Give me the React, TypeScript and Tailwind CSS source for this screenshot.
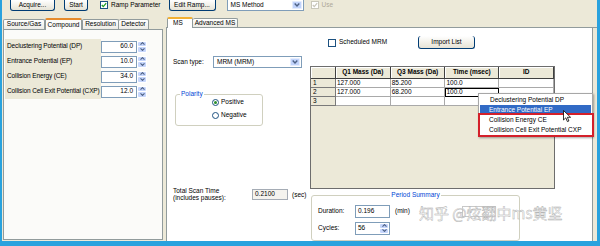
import React from "react";

function Chevron({ up = false }: { up?: boolean }) {
  return (
    <svg width="5" height="3" viewBox="0 0 5 3">
      <path
        d={up ? "M0.5 2.6 L2.5 0.6 L4.5 2.6" : "M0.5 0.4 L2.5 2.4 L4.5 0.4"}
        fill="none"
        stroke="#4d6185"
        strokeWidth="1.1"
      />
    </svg>
  );
}

function UpDown() {
  return (
    <div className="flex flex-col w-[10px] h-full gap-px p-px bg-white">
      <div className="flex-1 rounded-[1px] bg-[#c6d6fc] flex items-center justify-center">
        <Chevron up />
      </div>
      <div className="flex-1 rounded-[1px] bg-[#c6d6fc] flex items-center justify-center">
        <Chevron />
      </div>
    </div>
  );
}

function Combo({ label, className }: { label: string; className: string }) {
  return (
    <div className={`flex border border-[#7f9db9] bg-white ${className}`}>
      <div className="flex-1 flex items-center pl-[3px]">{label}</div>
      <div className="w-[10px] m-px rounded-[1px] bg-[#c1d3fb] border border-[#e4ecfd] flex items-center justify-center">
        <svg width="6" height="4" viewBox="0 0 6 4">
          <path d="M0.7 0.6 L3 3 L5.3 0.6" fill="none" stroke="#4d6185" strokeWidth="1.4" />
        </svg>
      </div>
    </div>
  );
}

function Check({ checked = false, disabled = false }: { checked?: boolean; disabled?: boolean }) {
  return (
    <div
      className={`w-[8px] h-[8px] border bg-white flex items-center justify-center ${
        disabled ? "border-[#c9c7ba]" : "border-[#1c5180]"
      }`}
    >
      {checked && (
        <svg width="6" height="6" viewBox="0 0 6 6">
          <path
            d="M0.8 3 L2.3 4.6 L5.2 1.2"
            fill="none"
            stroke={disabled ? "#c9c7ba" : "#21a121"}
            strokeWidth="1.3"
          />
        </svg>
      )}
    </div>
  );
}

function Radio({ on = false }: { on?: boolean }) {
  return (
    <div className="w-[7px] h-[7px] rounded-full border border-[#1c5180] bg-white flex items-center justify-center">
      {on && <div className="w-[3px] h-[3px] rounded-full bg-[#2a8f2a]" />}
    </div>
  );
}

function ToolButton({ label, className }: { label: string; className: string }) {
  return (
    <div
      className={`h-[11px] border border-t-0 border-[#003c74] rounded-b-[3px] bg-linear-to-b from-white to-[#e6e3d6] flex items-center justify-center ${className}`}
    >
      {label}
    </div>
  );
}

const compoundRows = [
  { label: "Declustering Potential (DP)", value: "60.0" },
  { label: "Entrance Potential (EP)", value: "10.0" },
  { label: "Collision Energy (CE)", value: "34.0" },
  { label: "Collision Cell Exit Potential (CXP)", value: "12.0" },
];

const gridRows = [
  ["1", "127.000", "85.200", "100.0", ""],
  ["2", "127.000", "68.200", "100.0", ""],
  ["3", "", "", "", ""],
];

const colWidths = ["w-[25px]", "w-[55px]", "w-[55px]", "w-[54px]", "w-[55px]"];

function LeftPanel() {
  return (
    <div className="w-[160px] flex flex-col">
      <div className="h-[17px] flex items-end border-b border-[#919b9c]">
        <div className="w-[42px] h-[10px] border border-b-0 border-[#919b9c] rounded-t-[2px] bg-linear-to-b from-white to-[#ecebe5] flex items-center justify-center">
          Source/Gas
        </div>
        <div className="w-[37px] h-[12px] -mb-px border-x border-[#919b9c] border-t-2 border-t-[#e68b2c] rounded-t-[2px] bg-[#fbfbf9] flex items-center justify-center">
          Compound
        </div>
        <div className="w-[37px] h-[10px] border border-b-0 border-[#919b9c] rounded-t-[2px] bg-linear-to-b from-white to-[#ecebe5] flex items-center justify-center">
          Resolution
        </div>
        <div className="w-[30px] h-[10px] border border-b-0 border-l-0 border-[#919b9c] rounded-t-[2px] bg-linear-to-b from-white to-[#ecebe5] flex items-center justify-center">
          Detector
        </div>
      </div>
      <div className="flex-1 border-x border-b border-[#919b9c] bg-[#fbfbf9] pt-[9px] mb-[1px]">
        {compoundRows.map((r) => (
          <div key={r.label} className="flex h-[15px] items-center">
            <div className="ml-px w-[96px] h-full bg-[#ece9d8] flex items-center pl-[2px] whitespace-nowrap tracking-[-0.12px]">
              {r.label}
            </div>
            <div className="flex h-[12px]">
              <div className="w-[36px] h-full border border-[#7f9db9] bg-white flex items-center justify-end pr-[3px]">
                {r.value}
              </div>
              <UpDown />
            </div>
          </div>
        ))}
      </div>
    </div>
  );
}

function Grid() {
  return (
    <div className="w-[245px] h-[123px] border border-[#6d6d6d] bg-[#ece9d8] flex flex-col">
      <div className="flex h-[12px]">
        {["", "Q1 Mass (Da)", "Q3 Mass (Da)", "Time (msec)", "ID"].map((h, i) => (
          <div
            key={i}
            className={`${colWidths[i]} h-full border-r border-b border-[#404040] shadow-[inset_1px_1px_0_#fff] flex items-center justify-center font-bold`}
          >
            {h}
          </div>
        ))}
      </div>
      {gridRows.map((row) => (
        <div key={row[0]} className="flex h-[9px]">
          {row.map((c, i) =>
            i === 0 ? (
              <div
                key={i}
                className={`${colWidths[i]} h-full border-r border-b border-[#7a7a7a] bg-[#ece9d8] flex items-center pl-[2px]`}
              >
                {c}
              </div>
            ) : (
              <div
                key={i}
                className={`${colWidths[i]} h-full border-r border-b border-[#a9a9a9] bg-white flex items-center pl-px ${
                  row[0] === "2" && i === 3 ? "outline outline-1 outline-black -outline-offset-1" : ""
                }`}
              >
                {c}
              </div>
            )
          )}
        </div>
      ))}
    </div>
  );
}

function RightPanel() {
  return (
    <div className="flex-1 flex flex-col">
      <div className="h-[15px] flex items-end border-b border-[#919b9c] pl-px">
        <div className="w-[26px] h-[11px] -mb-px border-x border-[#919b9c] border-t-2 border-t-[#f2b033] rounded-t-[2px] bg-white flex items-center pl-[5px]">
          MS
        </div>
        <div className="w-[45px] h-[9px] border border-b-0 border-l-0 border-[#919b9c] rounded-t-[2px] bg-linear-to-b from-white to-[#ecebe5] flex items-center justify-center">
          Advanced MS
        </div>
      </div>
      <div className="flex-1 flex border-l border-r border-[#919b9c] bg-white mr-[4px]">
        <div className="w-[143px] pl-[6px] pt-[28px] flex flex-col">
          <div className="flex h-[12px] items-center">
            <div className="w-[40px]">Scan type:</div>
            <Combo label="MRM (MRM)" className="w-[89px] h-[12px]" />
          </div>
          <fieldset className="mt-[23px] ml-[2px] w-[88px] h-[35px] border border-[#d0d0bf] rounded-[3px] pt-[1px]">
            <legend className="ml-[4px] px-[1px] text-[#0046d5]">Polarity</legend>
            <div className="flex flex-col gap-[6px] pl-[36px]">
              <div className="flex items-center gap-[2px]">
                <Radio on />
                <span>Positive</span>
              </div>
              <div className="flex items-center gap-[2px]">
                <Radio />
                <span>Negative</span>
              </div>
            </div>
          </fieldset>
          <div className="mt-[61px] flex items-start">
            <div className="w-[79px] leading-[7px]">
              Total Scan Time
              <br />
              (includes pauses):
            </div>
            <div className="mt-[2px] w-[36px] h-[11px] border border-[#a5acb5] bg-[#f4f3ee] flex items-center pl-[2px]">
              0.2100
            </div>
            <div className="ml-[4px] mt-[5px]">(sec)</div>
          </div>
        </div>
        <div className="flex-1 pt-[8px] flex flex-col">
          <div className="flex h-[13px] items-center pl-[18px]">
            <div className="w-[90px] flex items-center gap-[3px]">
              <Check />
              <span>Scheduled MRM</span>
            </div>
            <ToolButton label="Import List" className="w-[57px] h-[13px] border-t rounded-[3px]" />
          </div>
          <div className="mt-[17px]">
            <Grid />
          </div>
          <fieldset className="mt-[3px] ml-px w-[209px] flex-1 border border-[#d0d0bf] rounded-[3px] pt-[6px]">
            <legend className="mx-auto px-[1px] text-[#0046d5]">Period Summary</legend>
            <div className="flex h-[13px] items-center pl-[6px]">
              <div className="w-[37px]">Duration:</div>
              <div className="w-[35px] h-full border border-[#7f9db9] bg-white flex items-center pl-[2px]">0.196</div>
              <div className="ml-[5px]">(min)</div>
              <div className="ml-[52px] w-[34px] h-[11px] border border-[#c8c8c8] bg-white" />
            </div>
            <div className="flex h-[13px] items-center mt-[4px] pl-[6px]">
              <div className="w-[37px]">Cycles:</div>
              <div className="w-[35px] h-full flex border border-[#7f9db9] bg-white">
                <div className="flex-1 flex items-center pl-[2px]">56</div>
                <UpDown />
              </div>
            </div>
          </fieldset>
        </div>
      </div>
    </div>
  );
}

export default function App() {
  return (
    <div className="w-[600px] h-[246px] bg-[#29a2de] pl-[2px] pr-[3px] pb-[5px] font-['Liberation_Sans',Arial,sans-serif] text-[6.5px] leading-none text-black">
      <div className="relative w-full h-full bg-[#ece9d8] flex flex-col overflow-hidden">
        <div className="h-[13px] flex items-start pl-[8px]">
          <ToolButton label="Acquire..." className="w-[45px]" />
          <ToolButton label="Start" className="ml-[9px] w-[24px]" />
          <div className="ml-[12px] h-[10px] flex items-center gap-[3px]">
            <Check checked />
            <span>Ramp Parameter</span>
          </div>
          <ToolButton label="Edit Ramp..." className="ml-[8px] w-[47px]" />
          <Combo label="MS Method" className="ml-[11px] w-[77px] h-[11px] border-t-0" />
          <div className="ml-[7px] h-[10px] flex items-center gap-[3px] text-[#aca899]">
            <Check checked disabled />
            <span>Use</span>
          </div>
        </div>
        <div className="flex flex-1 min-h-0 pl-px">
          <LeftPanel />
          <div className="w-[3px]" />
          <RightPanel />
        </div>

        <div className="absolute left-[476px] top-[93px] w-[115px] h-[44px] bg-white border border-[#a7a7a7] shadow-[1px_1px_2px_rgba(0,0,0,0.35)] pt-[1px] px-[1px]">
          <div className="h-[10px] flex items-center pl-[10px]">Declustering Potential DP</div>
          <div className="h-[10px] flex items-center pl-[9px] bg-[#316ac5] text-white">Entrance Potential EP</div>
          <div className="h-[10px] flex items-center pl-[9px]">Collision Energy CE</div>
          <div className="h-[10px] flex items-center pl-[9px]">Collision Cell Exit Potential CXP</div>
          <div className="absolute -left-px -right-[2px] -bottom-px h-[24px] border-2 border-[#d4202a]" />
        </div>

        <svg className="absolute left-[561px] top-[110px]" width="9" height="13" viewBox="0 0 9 13">
          <path d="M0.5 0.5 L0.5 10 L2.8 7.8 L4.4 11.6 L5.9 11 L4.4 7.3 L7.6 7.3 Z" fill="#fff" stroke="#000" strokeWidth="0.8" />
        </svg>

        <div className="absolute left-[417px] top-[205px] text-[15px] leading-none font-['Noto_Sans_CJK_SC',sans-serif] text-[#fbfbfb] [-webkit-text-stroke:0.4px_#a9a9a9] whitespace-nowrap">
          知乎 @炫翻中ms黄坚
        </div>
      </div>
    </div>
  );
}
